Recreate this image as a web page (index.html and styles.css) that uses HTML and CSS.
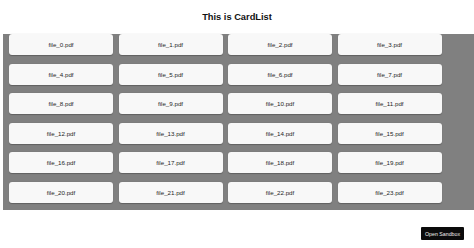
FILE: index.html
```html
<!DOCTYPE html>
<html>
<head>
<meta charset="utf-8">
<link rel="stylesheet" href="styles.css">
</head>
<body>
<div class="page">
  <header class="header"><h1 class="title">This is CardList</h1></header>
  <div class="list">
    <div class="grid">
      <div class="card">file_0.pdf</div>
      <div class="card">file_1.pdf</div>
      <div class="card">file_2.pdf</div>
      <div class="card">file_3.pdf</div>
      <div class="card">file_4.pdf</div>
      <div class="card">file_5.pdf</div>
      <div class="card">file_6.pdf</div>
      <div class="card">file_7.pdf</div>
      <div class="card">file_8.pdf</div>
      <div class="card">file_9.pdf</div>
      <div class="card">file_10.pdf</div>
      <div class="card">file_11.pdf</div>
      <div class="card">file_12.pdf</div>
      <div class="card">file_13.pdf</div>
      <div class="card">file_14.pdf</div>
      <div class="card">file_15.pdf</div>
      <div class="card">file_16.pdf</div>
      <div class="card">file_17.pdf</div>
      <div class="card">file_18.pdf</div>
      <div class="card">file_19.pdf</div>
      <div class="card">file_20.pdf</div>
      <div class="card">file_21.pdf</div>
      <div class="card">file_22.pdf</div>
      <div class="card">file_23.pdf</div>
    </div>
  </div>
  <div class="footer"><button class="sandbox">Open Sandbox</button></div>
</div>
</body>
</html>
```
FILE: styles.css
```css
html, body {
  margin: 0;
  padding: 0;
  background: #ffffff;
  overflow: hidden;
  font-family: "Liberation Sans", Arial, sans-serif;
}
.page {
  width: 474px;
  height: 248px;
}
.header {
  height: 34px;
  box-sizing: border-box;
  padding-top: 11.5px;
  display: flex;
  justify-content: center;
}
.title {
  margin: 0;
  font-size: 9.3px;
  line-height: 1.149;
  font-weight: bold;
  color: #111111;
}
.list {
  margin-left: 3px;
  height: 176px;
  box-sizing: border-box;
  background: #808080;
  padding: 0 6px 7px 6px;
}
.grid {
  display: grid;
  grid-template-columns: repeat(4, 104px);
  grid-auto-rows: 21px;
  column-gap: 5.5px;
  row-gap: 8.6px;
}
.card {
  background: #f8f8f8;
  border-radius: 3px;
  box-shadow: 0 0.5px 1px rgba(0, 0, 0, 0.25);
  display: flex;
  align-items: center;
  justify-content: center;
  font-size: 6.2px;
  color: #1e1e1e;
}
.footer {
  display: flex;
  justify-content: flex-end;
  padding: 17px 10px 0 0;
}
.sandbox {
  width: 43px;
  height: 13px;
  padding: 0;
  border: none;
  border-radius: 1px;
  background: #0b0b0b;
  color: #f0f0f0;
  font-family: "Liberation Sans", Arial, sans-serif;
  font-size: 5.25px;
  display: flex;
  align-items: center;
  justify-content: center;
}
```
